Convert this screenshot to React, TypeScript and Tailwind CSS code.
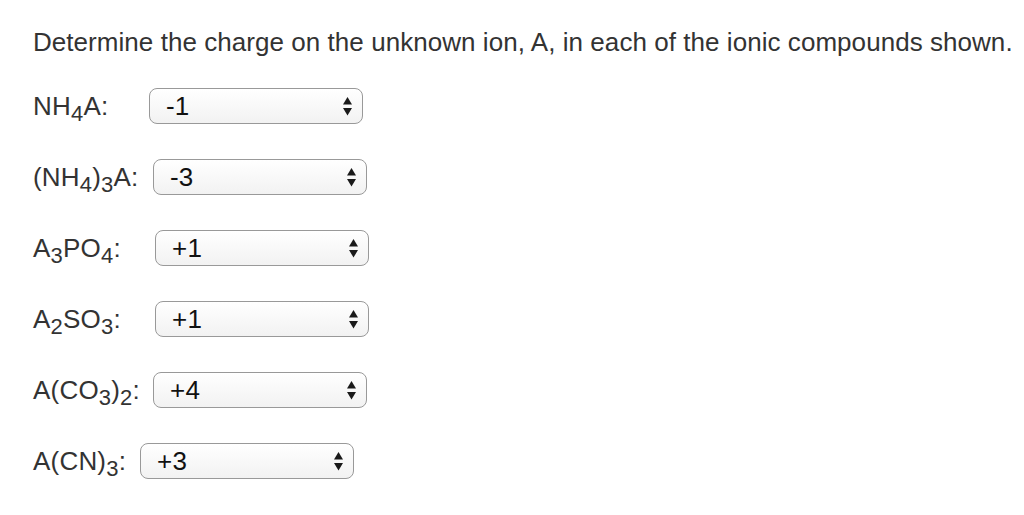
import React from "react";

type Row = {
  label: React.ReactNode;
  value: string;
  labelWidth: string;
};

const Sub = ({ children }: { children: React.ReactNode }) => (
  <sub className="bottom-[-6px] text-[22px]">{children}</sub>
);

const rows: Row[] = [
  {
    label: (
      <>
        NH<Sub>4</Sub>A:
      </>
    ),
    value: "-1",
    labelWidth: "w-[116px]",
  },
  {
    label: (
      <>
        (NH<Sub>4</Sub>)<Sub>3</Sub>A:
      </>
    ),
    value: "-3",
    labelWidth: "w-[120px]",
  },
  {
    label: (
      <>
        A<Sub>3</Sub>PO<Sub>4</Sub>:
      </>
    ),
    value: "+1",
    labelWidth: "w-[122px]",
  },
  {
    label: (
      <>
        A<Sub>2</Sub>SO<Sub>3</Sub>:
      </>
    ),
    value: "+1",
    labelWidth: "w-[122px]",
  },
  {
    label: (
      <>
        A(CO<Sub>3</Sub>)<Sub>2</Sub>:
      </>
    ),
    value: "+4",
    labelWidth: "w-[120px]",
  },
  {
    label: (
      <>
        A(CN)<Sub>3</Sub>:
      </>
    ),
    value: "+3",
    labelWidth: "w-[107px]",
  },
];

const Arrows = () => (
  <svg width="9" height="19" viewBox="0 0 9 19" className="shrink-0">
    <polygon points="4.5,0 9,7.5 0,7.5" fill="#1a1a1a" />
    <polygon points="0,11 9,11 4.5,18.5" fill="#1a1a1a" />
  </svg>
);

const FakeSelect = ({ value }: { value: string }) => (
  <div className="flex h-[36px] w-[214px] items-center justify-between rounded-[8px] border border-[#999] bg-gradient-to-b from-white to-[#f2f2f2] pl-[16px] pr-[10px] text-[#111]">
    <span className="leading-[34px]">{value}</span>
    <Arrows />
  </div>
);

export default function App() {
  return (
    <div
      className="min-h-[515px] w-[1024px] bg-white pl-[33px] pt-[27px] text-[26px] text-[#333]"
      style={{ fontFamily: '"Liberation Sans", Arial, sans-serif' }}
    >
      <p className="whitespace-nowrap leading-[30px] tracking-[0.05px]">
        Determine the charge on the unknown ion, A, in each of the ionic
        compounds shown.
      </p>
      <div className="mt-[31px] flex flex-col gap-[35px] tracking-[0.2px]">
        {rows.map((row, i) => (
          <div key={i} className="flex items-center">
            <div className={`${row.labelWidth} shrink-0 whitespace-nowrap leading-[36px]`}>
              {row.label}
            </div>
            <FakeSelect value={row.value} />
          </div>
        ))}
      </div>
    </div>
  );
}
